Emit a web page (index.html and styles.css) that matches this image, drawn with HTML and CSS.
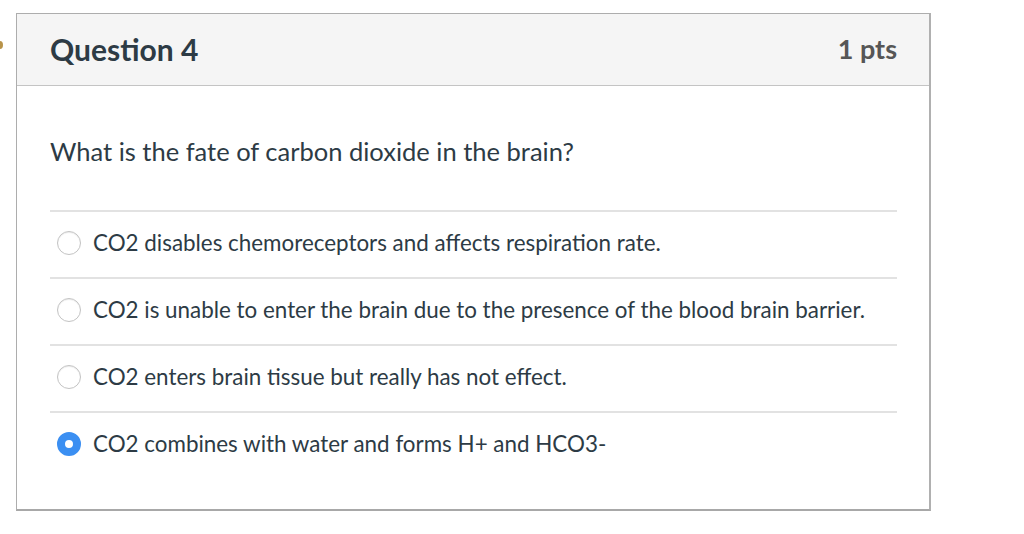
FILE: index.html
```html
<!DOCTYPE html>
<html>
<head>
<meta charset="utf-8">
<link rel="stylesheet" href="styles.css">
</head>
<body>
<span class="edge-mark"></span>
<div class="question">
  <div class="question-header">
    <h2 class="question-title">Question 4</h2>
    <div class="question-points">1 pts</div>
  </div>
  <div class="question-body">
    <p class="question-text">What is the fate of carbon dioxide in the brain?</p>
    <div class="answers">
      <div class="answer">
        <span class="radio"></span>
        <span class="answer-text">CO2 disables chemoreceptors and affects respiration rate.</span>
      </div>
      <div class="answer">
        <span class="radio"></span>
        <span class="answer-text">CO2 is unable to enter the brain due to the presence of the blood brain barrier.</span>
      </div>
      <div class="answer">
        <span class="radio"></span>
        <span class="answer-text">CO2 enters brain tissue but really has not effect.</span>
      </div>
      <div class="answer">
        <span class="radio radio-checked"></span>
        <span class="answer-text">CO2 combines with water and forms H+ and HCO3-</span>
      </div>
    </div>
  </div>
</div>
</body>
</html>
```

FILE: styles.css
```css
html, body {
  margin: 0;
  padding: 0;
  background: #fff;
}
body {
  font-family: Lato, "Open Sans", sans-serif;
  color: #2d3b45;
  position: relative;
  padding-top: 13px;
  padding-left: 16px;
  width: 1024px;
  height: 534px;
  box-sizing: border-box;
}
.edge-mark {
  position: absolute;
  left: -3px;
  top: 41px;
  width: 6px;
  height: 8px;
  border-radius: 50%;
  background: #b8934a;
}
.question {
  width: 915px;
  height: 498px;
  box-sizing: border-box;
  border: 1px solid #adadad;
  border-bottom: 2px solid #a8a8a8;
  border-right: 2px solid #b0b0b0;
}
.question-header {
  height: 72px;
  box-sizing: border-box;
  background: #f5f5f5;
  border-bottom: 1px solid #c4c4c4;
  display: flex;
  align-items: center;
  justify-content: space-between;
  padding: 0 32px 2px 33px;
}
.question-title {
  margin: 0;
  font-size: 30px;
  font-weight: 700;
  color: #2d3b45;
}
.question-points {
  font-size: 27px;
  font-weight: 700;
  color: #565656;
}
.question-body {
  padding: 0 32px 0 33px;
}
.question-text {
  margin: 0;
  padding-top: 50px;
  height: 124px;
  box-sizing: border-box;
  font-size: 25.5px;
  line-height: 30px;
}
.answers {
  display: flex;
  flex-direction: column;
}
.answer {
  height: 67px;
  box-sizing: border-box;
  border-top: 2px solid #e2e2e2;
  display: flex;
  align-items: center;
  padding-left: 7px;
  padding-bottom: 3px;
  gap: 12px;
}
.radio {
  width: 24px;
  height: 24px;
  box-sizing: border-box;
  border-radius: 50%;
  border: 1px solid #c3c3c3;
  background: #fff;
  box-shadow: inset 0 1px 1px rgba(0,0,0,0.08);
  flex: none;
}
.radio-checked {
  border: 8px solid #3b8ff2;
  box-shadow: none;
}
.answer-text {
  font-size: 22.4px;
  line-height: 26px;
}
```
